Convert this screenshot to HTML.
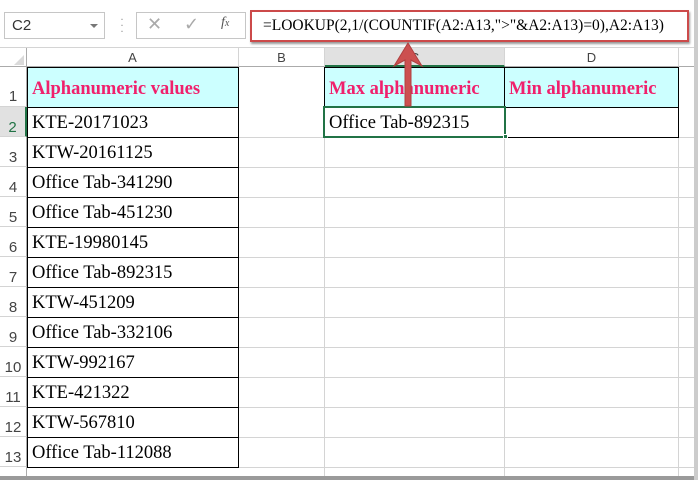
<!DOCTYPE html>
<html><head><style>
*{margin:0;padding:0;box-sizing:border-box}
body{width:698px;height:480px;background:#fff;position:relative;overflow:hidden;font-family:"Liberation Serif",serif}
.a{position:absolute}
.ch{position:absolute;top:48px;height:19px;background:#fff;border-right:1px solid #d4d4d4;border-bottom:1px solid #ababab;font:13px "Liberation Sans",sans-serif;color:#444;text-align:center;line-height:19px}
.rh{position:absolute;left:0;width:27px;border-right:1px solid #ababab;border-bottom:1px solid #d4d4d4;font:15px "Liberation Sans",sans-serif;color:#444;text-align:center}
.hl{position:absolute;left:27px;width:671px;height:1px;background:#d4d4d4}
.vl{position:absolute;top:67px;height:410px;width:1px;background:#d4d4d4}
.cell{position:absolute;left:27px;width:212px;height:31px;border:1px solid #000;font-size:18.5px;padding-left:4px;line-height:31px;color:#000}
.pk{color:#f0206c;font-weight:bold;font-size:18.5px}
</style></head><body>
<div class="a" style="left:0;top:0;width:698px;height:48px;background:#fff;border-bottom:1px solid #d4d4d4"></div>
<div class="a" style="left:4px;top:12px;width:101px;height:27px;border:1px solid #c6c6c6;font:15px 'Liberation Sans',sans-serif;line-height:25px;padding-left:7px;color:#333">C2</div>
<div class="a" style="left:90px;top:24px;width:0;height:0;border-left:4px solid transparent;border-right:4px solid transparent;border-top:4px solid #777"></div>
<div class="a" style="left:120px;top:16px;color:#999;font-size:12px;line-height:6px">·<br>·<br>·</div>
<div class="a" style="left:136px;top:12px;width:110px;height:27px;border:1px solid #c6c6c6"></div>
<div class="a" style="left:147px;top:14px;color:#aaa;font:18px 'Liberation Sans',sans-serif">✕</div>
<div class="a" style="left:184px;top:14px;color:#aaa;font:18px 'DejaVu Sans',sans-serif">✓</div>
<div class="a" style="left:221px;top:15px;color:#555;font:italic 14px 'Liberation Serif',serif"><i>f</i><span style="font-size:10px">x</span></div>
<div class="a" style="left:250px;top:10px;width:439px;height:32px;border:2px solid #cc4a4a;box-shadow:1px 2px 2px #999;font:15.5px 'Liberation Serif',serif;line-height:28px;padding-left:11px;color:#000;background:#fff">=LOOKUP(2,1/(COUNTIF(A2:A13,"&gt;"&amp;A2:A13)=0),A2:A13)</div>

<div class="a" style="left:0;top:48px;width:27px;height:19px;border-right:1px solid #ababab;border-bottom:1px solid #ababab"></div>
<div class="a" style="left:14px;top:55px;width:0;height:0;border-left:10px solid transparent;border-bottom:10px solid #dadada"></div>
<div class="ch" style="left:27px;width:212px">A</div>
<div class="ch" style="left:239px;width:86px">B</div>
<div class="ch" style="left:325px;width:180px;background:#e1e1e1;border-bottom:2px solid #217346">C</div>
<div class="ch" style="left:505px;width:174px">D</div>
<div class="ch" style="left:679px;width:19px"></div>

<div class="vl" style="left:324px"></div><div class="vl" style="left:504px"></div><div class="vl" style="left:678px"></div>
<div class="hl" style="top:137px"></div><div class="hl" style="top:167px"></div><div class="hl" style="top:197px"></div><div class="hl" style="top:227px"></div><div class="hl" style="top:257px"></div><div class="hl" style="top:287px"></div><div class="hl" style="top:317px"></div><div class="hl" style="top:347px"></div><div class="hl" style="top:377px"></div><div class="hl" style="top:407px"></div><div class="hl" style="top:437px"></div><div class="hl" style="top:467px"></div>

<div class="rh" style="top:67px;height:40px;line-height:60px">1</div>
<div class="rh" style="top:107px;height:30px;line-height:42px;background:#e1e1e1;border-right:2px solid #217346;color:#217346">2</div>
<div class="rh" style="top:137px;height:30px;line-height:42px">3</div>
<div class="rh" style="top:167px;height:30px;line-height:42px">4</div>
<div class="rh" style="top:197px;height:30px;line-height:42px">5</div>
<div class="rh" style="top:227px;height:30px;line-height:42px">6</div>
<div class="rh" style="top:257px;height:30px;line-height:42px">7</div>
<div class="rh" style="top:287px;height:30px;line-height:42px">8</div>
<div class="rh" style="top:317px;height:30px;line-height:42px">9</div>
<div class="rh" style="top:347px;height:30px;line-height:42px">10</div>
<div class="rh" style="top:377px;height:30px;line-height:42px">11</div>
<div class="rh" style="top:407px;height:30px;line-height:42px">12</div>
<div class="rh" style="top:437px;height:30px;line-height:42px">13</div>
<div class="rh" style="top:467px;height:10px"></div>

<div class="cell pk" style="top:67px;height:41px;background:#ccffff;line-height:42px">Alphanumeric values</div>
<div class="cell" style="top:107px">KTE-20171023</div>
<div class="cell" style="top:137px">KTW-20161125</div>
<div class="cell" style="top:167px">Office Tab-341290</div>
<div class="cell" style="top:197px">Office Tab-451230</div>
<div class="cell" style="top:227px">KTE-19980145</div>
<div class="cell" style="top:257px">Office Tab-892315</div>
<div class="cell" style="top:287px">KTW-451209</div>
<div class="cell" style="top:317px">Office Tab-332106</div>
<div class="cell" style="top:347px">KTW-992167</div>
<div class="cell" style="top:377px">KTE-421322</div>
<div class="cell" style="top:407px">KTW-567810</div>
<div class="cell" style="top:437px">Office Tab-112088</div>

<div class="a pk" style="left:324px;top:67px;width:355px;height:41px;background:#ccffff;border:1px solid #000;border-left:none"></div>
<div class="a pk" style="left:324px;top:67px;width:181px;height:41px;border:1px solid #000;padding-left:4px;line-height:42px">Max alphanumeric</div>
<div class="a pk" style="left:504px;top:67px;width:175px;height:41px;border:1px solid #000;padding-left:4px;line-height:42px">Min alphanumeric</div>
<div class="a" style="left:504px;top:107px;width:175px;height:31px;border:1px solid #000"></div>
<div class="a" style="left:323px;top:106px;width:183px;height:32px;border:2px solid #217346;font-size:18.5px;padding-left:4px;line-height:30px">Office Tab-892315</div>
<div class="a" style="left:503px;top:134px;width:5px;height:5px;background:#217346;border:1px solid #fff"></div>

<svg class="a" style="left:390px;top:40px" width="36" height="70"><path d="M15 20 L15 66 L21 66 L21 20 L32 26 L18 3 L4 26 Z" fill="#cc5050" stroke="#b04040" stroke-width="1"/></svg>

<div class="a" style="left:0;top:476px;width:698px;height:4px;background:#9a9a9a"></div>
<div class="a" style="left:694px;top:0;width:4px;height:480px;background:#ccc"></div>
</body></html>
